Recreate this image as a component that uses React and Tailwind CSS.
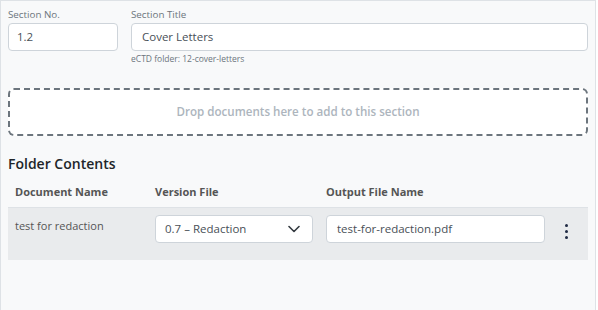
import React from "react";

export default function App() {
  return (
    <div className="w-[598px] h-[310px] bg-white" style={{ fontFamily: '"Open Sans", "Noto Sans", sans-serif' }}>
      <div className="w-[596px] h-[310px] bg-[#f8f9fa] border-l border-t border-r border-[#dee2e6] px-[7px] pt-[7px]">
        <div className="flex gap-[13px]">
          <div className="w-[110px] flex flex-col">
            <label className="text-[9.8px] leading-[14px] text-[#6c757d]">Section No.</label>
            <div className="mt-[1px] h-[28px] rounded-[4px] border border-[#ced4da] bg-white flex items-center px-[8px] text-[11.5px] text-[#495057]">1.2</div>
          </div>
          <div className="flex-1 flex flex-col">
            <label className="text-[9.8px] leading-[14px] text-[#6c757d]">Section Title</label>
            <div className="mt-[1px] h-[28px] rounded-[4px] border border-[#ced4da] bg-white flex items-center px-[10px] text-[11.5px] text-[#495057]">Cover Letters</div>
            <div className="mt-[2px] text-[8.5px] leading-[12px] text-[#6c757d]">eCTD folder: 12-cover-letters</div>
          </div>
        </div>
        <div className="mt-[23px] h-[48px] rounded-[6px] border-2 border-dashed border-[#6c757d] bg-white flex items-center justify-center text-[11.6px] font-semibold text-[#adb5bd]">
          Drop documents here to add to this section
        </div>
        <div className="mt-[18px] text-[14px] leading-[20px] font-semibold text-[#212529]">Folder Contents</div>
        <div className="mt-[4px]">
          <div className="flex h-[29px] items-center text-[11px] font-bold text-[#555]">
            <div className="w-[147px] pl-[7px]">Document Name</div>
            <div className="w-[171px]">Version File</div>
            <div>Output File Name</div>
          </div>
          <div className="border-t border-[#dee2e6] bg-[#e9ebed] h-[53px] flex items-start pt-[7px]">
            <div className="w-[147px] pl-[7px] text-[11px] text-[#555] pt-[3px]">test for redaction</div>
            <div className="w-[158px] h-[28px] rounded-[4px] border border-[#ced4da] bg-white flex items-center justify-between pl-[9px] pr-[12px] text-[11.5px] text-[#495057]">
              <span>0.7 – Redaction</span>
              <svg width="12" height="8" viewBox="0 0 12 8" fill="none" stroke="#343a40" strokeWidth="1.6" strokeLinecap="round" strokeLinejoin="round"><path d="M1 1.5l5 5 5-5" /></svg>
            </div>
            <div className="w-[13px]" />
            <div className="w-[219px] h-[28px] rounded-[4px] border border-[#ced4da] bg-white flex items-center px-[10px] text-[11.5px] text-[#495057]">test-for-redaction.pdf</div>
            <div className="flex-1 flex justify-center pt-[9px]">
              <div className="flex flex-col gap-[3px] items-center">
                <div className="w-[3px] h-[3px] rounded-full bg-[#1f2a44]" />
                <div className="w-[3px] h-[3px] rounded-full bg-[#1f2a44]" />
                <div className="w-[3px] h-[3px] rounded-full bg-[#1f2a44]" />
              </div>
            </div>
          </div>
        </div>
      </div>
    </div>
  );
}
